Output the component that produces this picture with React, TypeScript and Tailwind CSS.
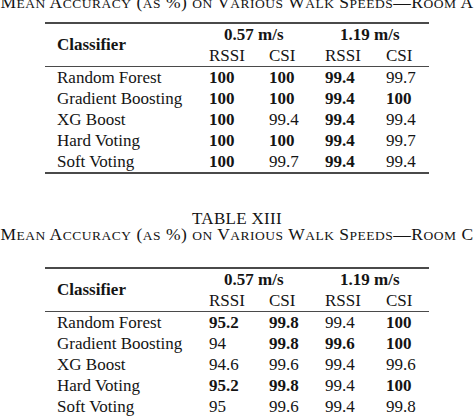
const SERIF = "font-['Liberation_Serif','Times_New_Roman',serif]";

type Cell = { v: string; b?: boolean };
type Row = { name: string; cells: Cell[] };

const ROOM_A: Row[] = [
  { name: "Random Forest", cells: [{ v: "100", b: true }, { v: "100", b: true }, { v: "99.4", b: true }, { v: "99.7" }] },
  { name: "Gradient Boosting", cells: [{ v: "100", b: true }, { v: "100", b: true }, { v: "99.4", b: true }, { v: "100", b: true }] },
  { name: "XG Boost", cells: [{ v: "100", b: true }, { v: "99.4" }, { v: "99.4", b: true }, { v: "99.4" }] },
  { name: "Hard Voting", cells: [{ v: "100", b: true }, { v: "100", b: true }, { v: "99.4", b: true }, { v: "99.7" }] },
  { name: "Soft Voting", cells: [{ v: "100", b: true }, { v: "99.7" }, { v: "99.4", b: true }, { v: "99.4" }] },
];

const ROOM_C: Row[] = [
  { name: "Random Forest", cells: [{ v: "95.2", b: true }, { v: "99.8", b: true }, { v: "99.4" }, { v: "100", b: true }] },
  { name: "Gradient Boosting", cells: [{ v: "94" }, { v: "99.8", b: true }, { v: "99.6", b: true }, { v: "100", b: true }] },
  { name: "XG Boost", cells: [{ v: "94.6" }, { v: "99.6" }, { v: "99.4" }, { v: "99.6" }] },
  { name: "Hard Voting", cells: [{ v: "95.2", b: true }, { v: "99.8", b: true }, { v: "99.4" }, { v: "100", b: true }] },
  { name: "Soft Voting", cells: [{ v: "95" }, { v: "99.6" }, { v: "99.4" }, { v: "99.8" }] },
];

const COLS = "grid grid-cols-[164px_60px_56px_61px_43px]";

// IEEE-style small caps: capitals stay full size, lowercase become smaller capitals.
function Caption({ children }: { children: string }) {
  const parts: { t: string; small: boolean }[] = [];
  for (const ch of children) {
    const small = ch !== ch.toUpperCase();
    const last = parts[parts.length - 1];
    if (last && last.small === small) last.t += small ? ch.toUpperCase() : ch;
    else parts.push({ t: small ? ch.toUpperCase() : ch, small });
  }
  return (
    <p className="m-0 -mx-[20px] whitespace-nowrap text-center text-[17.5px] leading-[14px] tracking-[0.5px]">
      {parts.map((p, i) =>
        p.small ? (
          <span key={i} className="text-[13.5px] leading-none">
            {p.t}
          </span>
        ) : (
          <span key={i}>{p.t}</span>
        ),
      )}
    </p>
  );
}

function ResultsTable({ rows }: { rows: Row[] }) {
  return (
    <div className="mx-auto w-[384px]">
      <div className="h-[2px] bg-[#4a4a4a]" />
      <div className={`${COLS} leading-[21px]`}>
        <div className="row-span-2 flex items-center pl-[12px] font-bold">Classifier</div>
        <div className="col-span-2 h-[21px] pl-[15px] font-bold">0.57 m/s</div>
        <div className="col-span-2 h-[21px] pl-[15px] font-bold">1.19 m/s</div>
        <div>RSSI</div>
        <div>CSI</div>
        <div>RSSI</div>
        <div>CSI</div>
      </div>
      <div className="h-[1.5px] bg-[#4a4a4a]" />
      <div className={`${COLS} leading-[21px]`}>
        {rows.map((row) => (
          <div key={row.name} className="contents">
            <div className="pl-[12px]">{row.name}</div>
            {row.cells.map((c, i) => (
              <div key={i} className={c.b ? "font-bold" : ""}>
                {c.v}
              </div>
            ))}
          </div>
        ))}
      </div>
      <div className="h-[2px] bg-[#4a4a4a]" />
    </div>
  );
}

export default function App() {
  return (
    <div className={`${SERIF} h-[417px] w-[474px] overflow-hidden bg-white text-[17px] text-[#141414]`}>
      <div className="-mt-[5px]">
        <Caption>Mean Accuracy (as %) on Various Walk Speeds—Room A</Caption>
      </div>
      <div className="mt-[11px]">
        <ResultsTable rows={ROOM_A} />
      </div>
      <div className="mt-[38px] text-center leading-[14px] tracking-[0.3px]">TABLE XIII</div>
      <div className="mt-[1px]">
        <Caption>Mean Accuracy (as %) on Various Walk Speeds—Room C</Caption>
      </div>
      <div className="mt-[24px]">
        <ResultsTable rows={ROOM_C} />
      </div>
    </div>
  );
}
